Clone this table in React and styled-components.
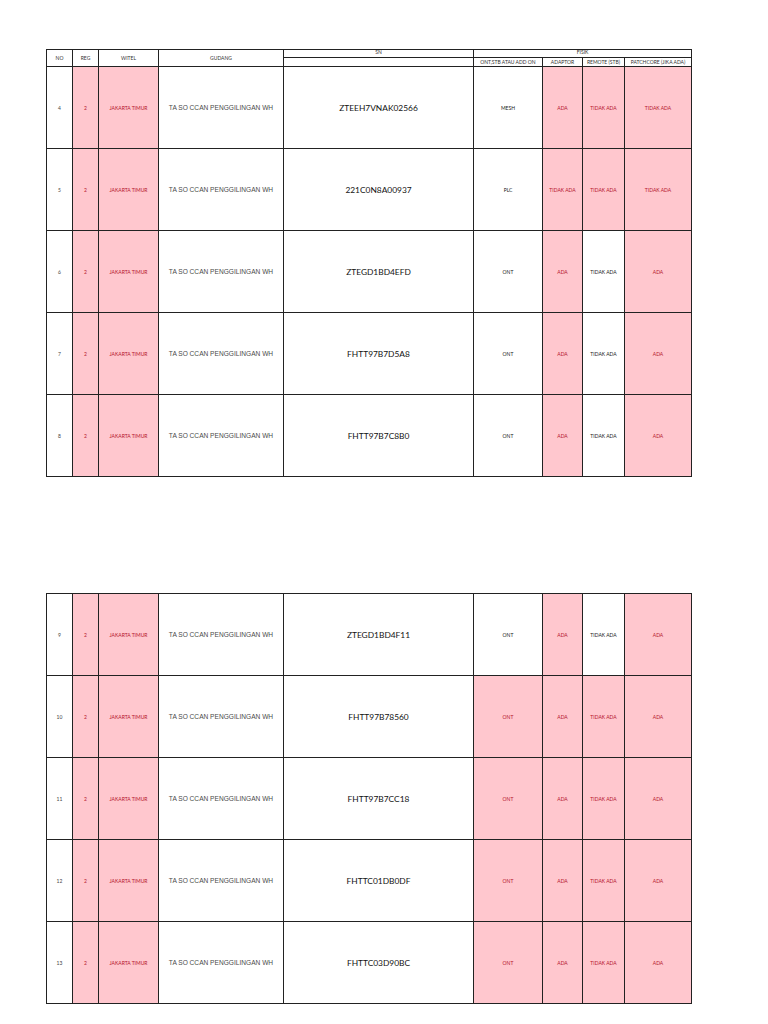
import React from "react";
import styled, { createGlobalStyle } from "styled-components";

const GlobalStyle = createGlobalStyle`
  html, body {
    margin: 0;
    padding: 0;
    background: #ffffff;
  }
`;

const Page = styled.div`
  display: flex;
  flex-direction: column;
  align-items: flex-start;
  gap: 116px;
  padding: 49px 0 0 46px;
`;

const Sheet = styled.table`
  border-collapse: collapse;
  table-layout: fixed;
  width: 645px;
  border: 1px solid #555;
`;

const HeadCell = styled.th`
  border: 1px solid #222;
  padding: 0;
  height: ${(p) => p.$h || 7}px;
  font-family: "Lato", "Liberation Sans", sans-serif;
  font-size: 5px;
  font-weight: 400;
  line-height: 5px;
  color: #333;
  text-align: center;
  vertical-align: ${(p) => (p.$top ? "top" : "middle")};
  white-space: nowrap;
  overflow: hidden;
  background: #fff;
`;

const Cell = styled.td`
  border: 1px solid #222;
  padding: 0;
  height: 81px;
  text-align: center;
  vertical-align: middle;
  white-space: nowrap;
  overflow: hidden;
  background: ${(p) => (p.$bad ? "#ffc7ce" : "#ffffff")};
  color: ${(p) => (p.$bad ? "#b5142c" : "#222")};
  font-family: ${(p) => p.$font || '"Lato", "Liberation Sans", sans-serif'};
  font-size: ${(p) => p.$size || 5}px;
`;

const NoCell = styled(Cell)`
  && {
    color: #444;
  }
`;

const PlaceCell = styled(Cell)`
  && {
    font-family: "Liberation Sans", Arial, sans-serif;
    font-size: 6.6px;
    color: #4a4a4a;
  }
`;

const SerialCell = styled(Cell)`
  && {
    font-size: 8.4px;
    color: #111;
  }
`;

const widths = [26, 26, 60, 125, 190, 69, 40, 42, 67];

const tableOne = [
  { no: 4, sn: "ZTEEH7VNAK02566", type: "MESH", typeBad: false, adaptor: "ADA", remote: ["TIDAK ADA", true], patch: "TIDAK ADA" },
  { no: 5, sn: "221C0N8A00937", type: "PLC", typeBad: false, adaptor: "TIDAK ADA", remote: ["TIDAK ADA", true], patch: "TIDAK ADA" },
  { no: 6, sn: "ZTEGD1BD4EFD", type: "ONT", typeBad: false, adaptor: "ADA", remote: ["TIDAK ADA", false], patch: "ADA" },
  { no: 7, sn: "FHTT97B7D5A8", type: "ONT", typeBad: false, adaptor: "ADA", remote: ["TIDAK ADA", false], patch: "ADA" },
  { no: 8, sn: "FHTT97B7C8B0", type: "ONT", typeBad: false, adaptor: "ADA", remote: ["TIDAK ADA", false], patch: "ADA" },
];

const tableTwo = [
  { no: 9, sn: "ZTEGD1BD4F11", type: "ONT", typeBad: false, adaptor: "ADA", remote: ["TIDAK ADA", false], patch: "ADA" },
  { no: 10, sn: "FHTT97B78560", type: "ONT", typeBad: true, adaptor: "ADA", remote: ["TIDAK ADA", true], patch: "ADA" },
  { no: 11, sn: "FHTT97B7CC18", type: "ONT", typeBad: true, adaptor: "ADA", remote: ["TIDAK ADA", true], patch: "ADA" },
  { no: 12, sn: "FHTTC01DB0DF", type: "ONT", typeBad: true, adaptor: "ADA", remote: ["TIDAK ADA", true], patch: "ADA" },
  { no: 13, sn: "FHTTC03D90BC", type: "ONT", typeBad: true, adaptor: "ADA", remote: ["TIDAK ADA", true], patch: "ADA" },
];

function Cols() {
  return (
    <colgroup>
      {widths.map((w, i) => (
        <col key={i} style={{ width: w }} />
      ))}
    </colgroup>
  );
}

function Row({ row }) {
  return (
    <tr>
      <NoCell>{row.no}</NoCell>
      <Cell $bad>2</Cell>
      <Cell $bad>JAKARTA TIMUR</Cell>
      <PlaceCell>TA SO CCAN PENGGILINGAN WH</PlaceCell>
      <SerialCell>{row.sn}</SerialCell>
      <Cell $bad={row.typeBad}>{row.type}</Cell>
      <Cell $bad>{row.adaptor}</Cell>
      <Cell $bad={row.remote[1]}>{row.remote[0]}</Cell>
      <Cell $bad>{row.patch}</Cell>
    </tr>
  );
}

export default function App() {
  return (
    <>
      <GlobalStyle />
      <Page>
        <Sheet>
          <Cols />
          <thead>
            <tr>
              <HeadCell rowSpan={2}>NO</HeadCell>
              <HeadCell rowSpan={2}>REG</HeadCell>
              <HeadCell rowSpan={2}>WITEL</HeadCell>
              <HeadCell rowSpan={2}>GUDANG</HeadCell>
              <HeadCell $top $h={7}>SN</HeadCell>
              <HeadCell $top $h={7} colSpan={4}>FISIK</HeadCell>
            </tr>
            <tr>
              <HeadCell $h={8} />
              <HeadCell $h={8}>ONT,STB ATAU ADD ON</HeadCell>
              <HeadCell $h={8}>ADAPTOR</HeadCell>
              <HeadCell $h={8}>REMOTE (STB)</HeadCell>
              <HeadCell $h={8}>PATCHCORE (JIKA ADA)</HeadCell>
            </tr>
          </thead>
          <tbody>
            {tableOne.map((r) => (
              <Row key={r.no} row={r} />
            ))}
          </tbody>
        </Sheet>
        <Sheet>
          <Cols />
          <tbody>
            {tableTwo.map((r) => (
              <Row key={r.no} row={r} />
            ))}
          </tbody>
        </Sheet>
      </Page>
    </>
  );
}
